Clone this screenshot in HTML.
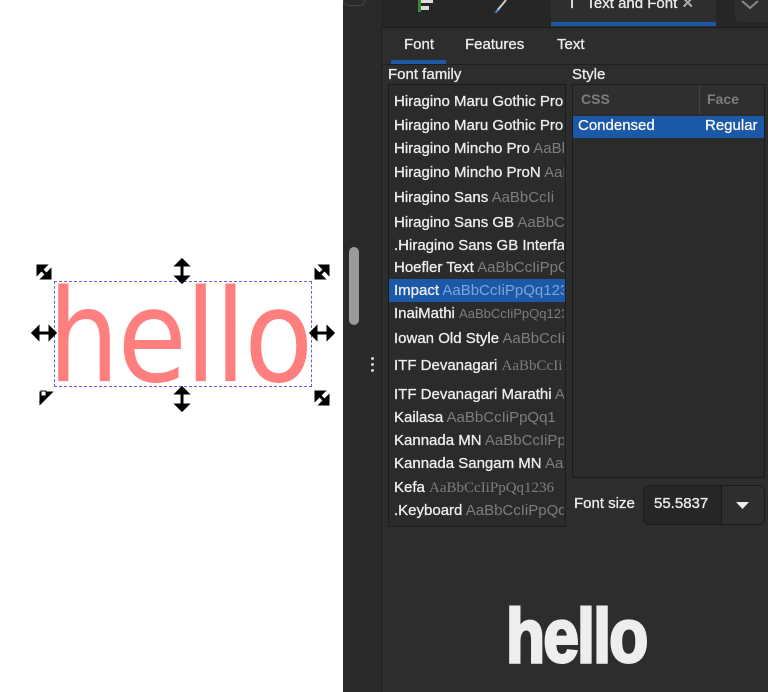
<!DOCTYPE html>
<html><head><meta charset="utf-8"><style>
*{margin:0;padding:0;box-sizing:border-box}
body{width:768px;height:692px;overflow:hidden;background:#fff;position:relative;font-family:"Liberation Sans",sans-serif}
.a{position:absolute}
.dark{left:343px;top:0;width:425px;height:692px;background:#2a2a2a}
.panel{left:381px;top:27px;width:387px;height:665px;background:#2d2d2d;border-left:1px solid #1e1e1e;border-top:1px solid #1e1e1e}
.t{color:#ececec;font-size:15px;white-space:nowrap;-webkit-text-stroke:0.3px #ececec}
.g{color:#7d7d7d;-webkit-text-stroke:0}
.row{position:absolute;left:5px;white-space:nowrap;font-size:15px;color:#eee;width:170px;overflow:hidden;-webkit-text-stroke:0.3px #eee}
</style></head><body>
<!-- canvas -->
<div class="a" style="left:54px;top:281px;width:258px;height:106px;border:1px dashed #6060e8"></div>
<div class="a" style="left:48px;top:274px;font-size:128px;color:#ff7f7f;font-family:'DejaVu Sans',sans-serif;line-height:1;transform:scaleX(0.88);transform-origin:0 0;letter-spacing:-2px">hello</div>
<svg class="a" style="left:30px;top:255px" width="310" height="160" viewBox="0 0 310 160">
<g fill="#000" stroke="#000">
<path d="M9 12 L19 22 M8 11 l0 7 l7 -7 z M20 23 l0 -7 l-7 7z" stroke-width="3"/>
<path d="M297 12 L287 22 M298 11 l0 7 l-7 -7z M286 23 l0 -7 l7 7z" stroke-width="3"/>
<path d="M297 148 L287 138 M298 149 l0 -7 l-7 7z M286 137 l0 7 l7 -7z" stroke-width="3"/>
<path d="M152 8 v16 M147 10 l5 -5 l5 5z M147 22 l5 5 l5 -5z" stroke-width="3"/>
<path d="M152 136 v16 M147 138 l5 -5 l5 5z M147 150 l5 5 l5 -5z" stroke-width="3"/>
<path d="M6 78 h16 M8 73 l-5 5 l5 5z M20 73 l5 5 l-5 5z" stroke-width="3"/>
<path d="M284 78 h16 M286 73 l-5 5 l5 5z M298 73 l5 5 l-5 5z" stroke-width="3"/>
<path d="M10 148 L20 138 M11 147 l0 -9 l9 0z" stroke-width="3"/>
</g>
<rect x="11" y="136" width="5" height="5" fill="#fff" stroke="#000"/>
</svg>
<!-- dark panel -->
<div class="a dark"></div>
<div class="a" style="left:343px;top:0;width:22px;height:6px;border:1px solid #444;border-top:none;border-radius:0 0 5px 5px"></div>
<div class="a" style="left:349px;top:247px;width:10px;height:78px;background:#9a9a9a;border-radius:5px"></div>
<div class="a" style="left:371px;top:357px;width:3px;height:3px;background:#ccc;border-radius:2px;box-shadow:0 6px 0 #ccc,0 12px 0 #ccc"></div>
<!-- top tabs -->
<div class="a" style="left:381px;top:0;width:387px;height:27px;background:#262626"></div>
<div class="a" style="left:418px;top:0;width:3px;height:12px;background:#3a8a3a"></div>
<div class="a" style="left:421px;top:0;width:12px;height:3px;background:#ddd"></div>
<div class="a" style="left:421px;top:6px;width:8px;height:4px;background:#ddd"></div>
<svg class="a" style="left:492px;top:0" width="20" height="14"><path d="M4 12 L14 0" stroke="#ccc" stroke-width="2"/><path d="M2 13 l3 -4 l2 2z" fill="#2b8be0"/></svg>
<div class="a" style="left:551px;top:0;width:165px;height:27px;background:#2e2e2e"></div>
<div class="a" style="left:551px;top:22px;width:165px;height:4px;background:#1c5aa8"></div>
<div class="a t" style="left:570px;top:-6px;font-size:15px">I&nbsp;&nbsp; Text and Font <span style="color:#999">✕</span></div>
<div class="a" style="left:735px;top:0;width:33px;height:22px;background:#2e2e2e;border-radius:0 0 0 6px"></div>
<svg class="a" style="left:740px;top:0" width="20" height="10"><path d="M2 1 l8 7 l8 -7" stroke="#888" stroke-width="2" fill="none"/></svg>
<!-- panel -->
<div class="a panel"></div>
<div class="a" style="left:382px;top:64px;width:386px;height:1px;background:#1f1f1f"></div>
<div class="a t" style="left:404px;top:36px">Font</div>
<div class="a t" style="left:465px;top:36px">Features</div>
<div class="a t" style="left:557px;top:36px">Text</div>
<div class="a" style="left:391px;top:60px;width:55px;height:4px;background:#1c5aa8"></div>
<div class="a t" style="left:388px;top:66px">Font family</div>
<div class="a t" style="left:572px;top:66px">Style</div>
<!-- list -->
<div class="a" style="left:388px;top:84px;width:178px;height:443px;background:#2b2b2b;border:1px solid #1c1c1c;overflow:hidden">
<div class="a" style="left:0;top:194px;width:178px;height:23px;background:#1c58a8"></div>
<div class="row" style="top:8px">Hiragino Maru Gothic Pro</div>
<div class="row" style="top:32px">Hiragino Maru Gothic Pro</div>
<div class="row" style="top:55px">Hiragino Mincho Pro <span class="g">AaBb</span></div>
<div class="row" style="top:79px">Hiragino Mincho ProN <span class="g">AaBb</span></div>
<div class="row" style="top:104px">Hiragino Sans <span class="g">AaBbCcIi</span></div>
<div class="row" style="top:129px">Hiragino Sans GB <span class="g">AaBbCc</span></div>
<div class="row" style="top:152px">.Hiragino Sans GB Interface</div>
<div class="row" style="top:174px">Hoefler Text <span class="g">AaBbCcIiPpQq</span></div>
<div class="row" style="top:197px">Impact <span style="color:#7fa4d8;-webkit-text-stroke:0">AaBbCcIiPpQq123</span></div>
<div class="row" style="top:220px">InaiMathi <span class="g" style="font-size:13px">AaBbCcIiPpQq123</span></div>
<div class="row" style="top:245px">Iowan Old Style <span class="g">AaBbCcIi</span></div>
<div class="row" style="top:272px">ITF Devanagari <span class="g" style="font-family:'Liberation Serif',serif">AaBbCcIi</span></div>
<div class="row" style="top:301px">ITF Devanagari Marathi <span class="g">A</span></div>
<div class="row" style="top:324px">Kailasa <span class="g">AaBbCcIiPpQq1</span></div>
<div class="row" style="top:347px">Kannada MN <span class="g">AaBbCcIiPp</span></div>
<div class="row" style="top:370px">Kannada Sangam MN <span class="g">Aa</span></div>
<div class="row" style="top:394px">Kefa <span class="g" style="font-family:'Liberation Serif',serif">AaBbCcIiPpQq1236</span></div>
<div class="row" style="top:417px">.Keyboard <span class="g">AaBbCcIiPpQq</span></div>
</div>
<!-- style box -->
<div class="a" style="left:572px;top:84px;width:193px;height:394px;background:#2b2b2b;border:1px solid #1c1c1c">
<div class="a" style="left:0;top:0;width:191px;height:29px;background:#2f2f2f"></div>
<div class="a" style="left:126px;top:0;width:1px;height:29px;background:#444"></div>
<div class="a t" style="left:8px;top:6px;color:#7d7d7d;font-weight:bold;font-size:14px;-webkit-text-stroke:0">CSS</div>
<div class="a t" style="left:134px;top:6px;color:#7d7d7d;font-weight:bold;font-size:14px;-webkit-text-stroke:0">Face</div>
<div class="a" style="left:0;top:31px;width:191px;height:22px;background:#1c58a8"></div>
<div class="a t" style="left:5px;top:32px;color:#fff">Condensed</div>
<div class="a t" style="left:132px;top:32px;color:#fff">Regular</div>
</div>
<div class="a t" style="left:574px;top:495px">Font size</div>
<div class="a" style="left:643px;top:485px;width:122px;height:40px;background:#262626;border:1px solid #1b1b1b;border-radius:6px"></div>
<div class="a" style="left:721px;top:486px;width:43px;height:38px;background:#2e2e2e;border-left:1px solid #1b1b1b;border-radius:0 6px 6px 0"></div>
<div class="a t" style="left:654px;top:495px">55.5837</div>
<svg class="a" style="left:735px;top:501px" width="16" height="9"><path d="M1 1 h13 l-6.5 7z" fill="#eee"/></svg>
<div class="a" style="left:506px;top:599px;font-size:76px;font-weight:bold;color:#eee;line-height:1;transform:scaleX(0.84);transform-origin:0 0;letter-spacing:-2px;-webkit-text-stroke:3px #eee">hello</div>
</body></html>
